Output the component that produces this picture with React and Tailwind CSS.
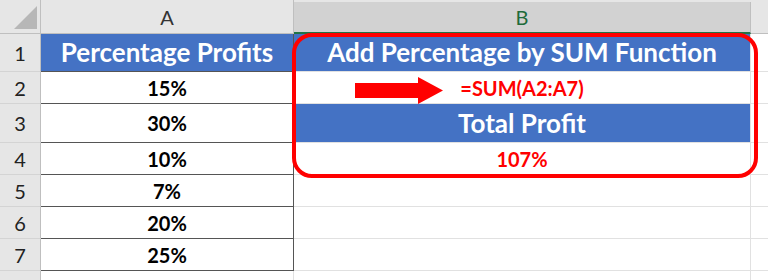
import React from 'react';

const rows = [
  { n: 1, h: 'h-[38px]', a: 'Percentage Profits', b: 'Add Percentage by SUM Function', headA: true, headB: true },
  { n: 2, h: 'h-[32px]', a: '15%', b: '=SUM(A2:A7)', red: true },
  { n: 3, h: 'h-[39px]', a: '30%', b: 'Total Profit', headB: true },
  { n: 4, h: 'h-[32px]', a: '10%', b: '107%', red: true },
  { n: 5, h: 'h-[32px]', a: '7%', b: '' },
  { n: 6, h: 'h-[32px]', a: '20%', b: '' },
  { n: 7, h: 'h-[32px]', a: '25%', b: '' },
  { n: '', h: 'h-[32px]', a: null, b: '' },
];

export default function App() {
  return (
    <div className="relative w-[768px] h-[280px] overflow-hidden bg-white font-['Lato','Liberation_Sans',sans-serif]">
      {/* column headers */}
      <div className="flex h-[34px] bg-[#e6e6e6]">
        <div className="relative w-[41px] border-r border-b border-[#bfbfbf]">
          <svg className="absolute right-[3px] bottom-[4px]" width="23" height="23" viewBox="0 0 23 23">
            <polygon points="23,0 23,23 0,23" fill="#b7b7b7" />
          </svg>
        </div>
        <div className="w-[253px] flex items-center justify-center text-[20px] text-[#333] border-r border-b border-[#bfbfbf]">
          A
        </div>
        <div className="w-[457px] flex flex-col">
          <div className="h-[5px]" />
          <div className="flex-1 flex items-center justify-center bg-[#d2d2d2] text-[20px] text-[#1e6b3a] border-r border-[#bfbfbf] border-b-2 border-b-[#217346]">
            B
          </div>
        </div>
        <div className="flex-1 border-b border-[#bfbfbf]" />
      </div>

      {rows.map((r, i) => (
        <div key={i} className={`flex ${r.h}`}>
          <div className="w-[41px] flex items-center justify-center bg-[#e6e6e6] text-[20px] text-[#222] border-r border-b border-[#bfbfbf] border-b-[#d4d4d4]">
            {r.n}
          </div>
          {r.a === null ? (
            <div className="w-[253px] border-r border-b border-[#e1e1e1]" />
          ) : (
            <div
              className={`w-[253px] flex items-center justify-center font-bold border-r border-b border-[#555] ${
                r.headA ? 'bg-[#4472c4] text-white text-[26px]' : 'bg-white text-black text-[20px]'
              }`}
            >
              {r.a}
            </div>
          )}
          <div
            className={`w-[457px] flex items-center justify-center font-bold border-r border-b border-[#e1e1e1] ${
              r.headB ? 'bg-[#4472c4] text-white text-[26px]' : r.red ? 'text-[#ff0000] text-[20px]' : ''
            }`}
          >
            {r.b}
          </div>
          <div className="flex-1 border-b border-[#e1e1e1]" />
        </div>
      ))}

      {/* red highlight box */}
      <div className="absolute left-[292px] top-[33px] w-[466px] h-[145px] border-4 border-[#ff0000] rounded-[20px]" />

      {/* arrow */}
      <svg className="absolute left-[355px] top-[77px]" width="88" height="27" viewBox="0 0 88 27">
        <polygon points="0,6 63,6 63,0 88,13.5 63,27 63,21 0,21" fill="#ff0000" />
      </svg>
    </div>
  );
}
